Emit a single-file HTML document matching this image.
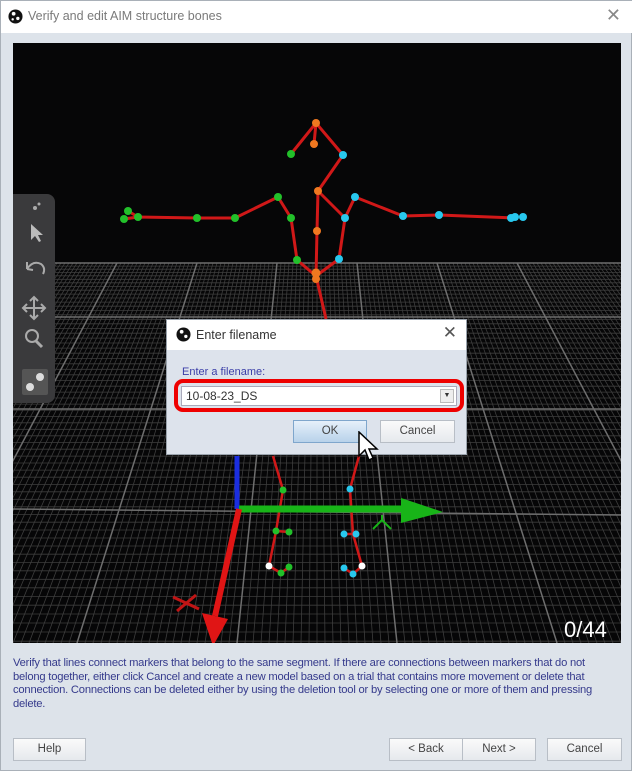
<!DOCTYPE html>
<html><head><meta charset="utf-8"><style>
*{margin:0;padding:0;box-sizing:border-box}
body{width:632px;height:771px;background:#dde3ea;font-family:"Liberation Sans",sans-serif;position:relative;overflow:hidden;border:1px solid #a9b0b8}
.title{position:absolute;left:0;top:0;width:632px;height:32px;background:#fff;font-size:12.5px;color:#7a7a7a}
.title span{position:absolute;left:27px;top:8px}
.x{position:absolute;right:12px;top:4px;font-size:18px;color:#888;font-weight:300}
.vp{position:absolute;left:12px;top:42px;width:608px;height:600px;background:#060607;overflow:hidden}
.btn{position:absolute;height:23px;border:1px solid #b8bec6;background:linear-gradient(#fafafa,#e6e9ed);font-size:11.5px;color:#444;text-align:center;line-height:21px}
.desc{position:absolute;left:12px;top:656px;width:592px;font-size:11.2px;line-height:13.5px;color:#353a8c;letter-spacing:-0.2px}
</style></head><body>
<div class="title">
<svg style="position:absolute;left:7px;top:8px" width="15" height="15" viewBox="0 0 16 16"><circle cx="8" cy="8" r="7.5" fill="#111"/><circle cx="6" cy="5" r="2" fill="#fff"/><circle cx="10.5" cy="10" r="1.8" fill="#fff"/><circle cx="5" cy="11" r="1.3" fill="#fff"/></svg>
<span>Verify and edit AIM structure bones</span><div class="x">✕</div></div>

<div class="vp">
<svg width="608" height="600" viewBox="12 42 608 600" style="position:absolute;left:0;top:0">
<g id="grid">
<g id="fallback" stroke="#3a3a3a" stroke-width="1" fill="none">
<path d="M12 262H620M12 268H620M12 275H620M12 282H620M12 290H620M12 298H620M12 307H620M12 316H620M12 326H620M12 336H620M12 347H620M12 358H620M12 370H620M12 382H620M12 395H620M12 408H620M12 422H620M12 436H620M12 451H620M12 466H620M12 482H620M12 498H620M12 515H620M12 532H620M12 550H620M12 568H620M12 587H620M12 606H620M12 626H620"/>
<path d="M16 262L-284 642M36 262L-244 642M56 262L-204 642M76 262L-164 642M96 262L-124 642M116 262L-84 642M136 262L-44 642M156 262L-4 642M176 262L36 642M196 262L76 642M216 262L116 642M236 262L156 642M256 262L196 642M276 262L236 642M296 262L276 642M316 262L316 642M336 262L356 642M356 262L396 642M376 262L436 642M396 262L476 642M416 262L516 642M436 262L556 642M456 262L596 642M476 262L636 642M496 262L676 642M516 262L716 642M536 262L756 642M556 262L796 642M576 262L836 642M596 262L876 642M616 262L916 642"/>
</g>
</g>
<g stroke="#6e6e6e" stroke-width="1.5" fill="none">
<path d="M12 262H620M12 316H620M12 508L620 514M12 408H620M276 262L236 642M356 262L396 642M196 262L76 642M436 262L556 642M516 262L716 642M116 262L-84 642"/>
</g>
<g stroke="#d01818" stroke-width="3" fill="none" stroke-linejoin="round">
<path d="M290 153L315 122L313 143M315 122L342 154L317 190L316 230L315 275L325 318M317 190L344 217M277 196L290 217L296 259L315 275L338 258L344 217L354 196L402 215L438 214L515 217M277 196L234 217L196 217L137 216L123 218M137 216L127 210"/>
<path d="M272 455L282 489L275 530L268 565L280 572L288 566M358 455L349 488L352 533L361 565L352 573L343 567M275 530L288 531M343 533L355 533" stroke-width="2.5"/>
</g>
<path d="M236 455V508" stroke="#1b2ee0" stroke-width="5"/>
<path d="M238 508H405" stroke="#18b418" stroke-width="7"/>
<path d="M400 497L442 511L400 522Z" fill="#18b418"/>
<path d="M372 528L381 519L390 528M381 519V514" stroke="#18b418" stroke-width="2" fill="none"/>
<path d="M238 508L214 615" stroke="#e01515" stroke-width="6"/>
<path d="M201 612L227 618L212 645Z" fill="#e01515"/>
<path d="M172 596L198 608M176 610L195 594" stroke="#c01515" stroke-width="3"/>
<g fill="#22c02a"><circle cx="290" cy="153" r="4"/><circle cx="277" cy="196" r="4"/><circle cx="290" cy="217" r="4"/><circle cx="296" cy="259" r="4"/><circle cx="234" cy="217" r="4"/><circle cx="196" cy="217" r="4"/><circle cx="137" cy="216" r="4"/><circle cx="123" cy="218" r="4"/><circle cx="127" cy="210" r="4"/><circle cx="282" cy="489" r="3.5"/><circle cx="275" cy="530" r="3.5"/><circle cx="288" cy="531" r="3.5"/><circle cx="280" cy="572" r="3.5"/><circle cx="288" cy="566" r="3.5"/></g>
<g fill="#28c8ee"><circle cx="342" cy="154" r="4"/><circle cx="354" cy="196" r="4"/><circle cx="344" cy="217" r="4"/><circle cx="338" cy="258" r="4"/><circle cx="402" cy="215" r="4"/><circle cx="438" cy="214" r="4"/><circle cx="510" cy="217" r="4"/><circle cx="514" cy="216" r="4"/><circle cx="522" cy="216" r="4"/><circle cx="349" cy="488" r="3.5"/><circle cx="343" cy="533" r="3.5"/><circle cx="355" cy="533" r="3.5"/><circle cx="352" cy="573" r="3.5"/><circle cx="343" cy="567" r="3.5"/></g>
<g fill="#f07820"><circle cx="315" cy="122" r="4"/><circle cx="313" cy="143" r="4"/><circle cx="317" cy="190" r="4"/><circle cx="316" cy="230" r="4"/><circle cx="315" cy="272" r="4.5"/><circle cx="315" cy="278" r="4"/></g>
<g fill="#fff"><circle cx="268" cy="565" r="3.5"/><circle cx="361" cy="565" r="3.5"/></g>
<text x="563" y="636" fill="#fff" font-size="22" font-family="Liberation Sans">0/44</text>
</svg>
<div style="position:absolute;left:0;top:151px;width:42px;height:209px;background:#3a3a3c;border-radius:0 8px 8px 0"></div>
<svg style="position:absolute;left:0;top:151px" width="42" height="209" viewBox="0 0 42 209" fill="none" stroke="#aaa" stroke-width="2">
<circle cx="22" cy="14" r="2" fill="#aaa" stroke="none"/><circle cx="26" cy="10" r="1.5" fill="#aaa" stroke="none"/>
<path d="M18 30L18 46L22 42L26 48L28 47L25 41L30 41Z" fill="#bbb" stroke="none"/>
<path d="M14 75Q20 66 28 70Q33 74 30 80M14 75L14 68M14 75L20 76"/>
<path d="M21 103V125M10 114H32M17 107L21 103L25 107M17 121L21 125L25 121M14 110L10 114L14 118M28 110L32 114L28 118"/>
<circle cx="19" cy="142" r="6"/><path d="M23 147L29 153" stroke-width="3"/>
<rect x="9" y="175" width="26" height="26" rx="2" fill="#555" stroke="none"/>
<circle cx="27" cy="183" r="4" fill="#ddd" stroke="none"/><circle cx="17" cy="193" r="4" fill="#ddd" stroke="none"/>
</svg>
</div>
<script>
(function(){
var g=document.getElementById('grid'),fb=document.getElementById('fallback');
var d='';
for(var k=0;k<80;k++){var y=262+3*k+0.05*k*k;if(y>645)break;d+='M12 '+y.toFixed(1)+'H620';}
for(var i=-80;i<=80;i++){d+='M'+(316+4*i)+' 262L'+(316+8*i)+' 642';}
var p=document.createElementNS('http://www.w3.org/2000/svg','path');
p.setAttribute('d',d);p.setAttribute('stroke','#3d3d3d');p.setAttribute('stroke-width','0.8');p.setAttribute('fill','none');
g.removeChild(fb);g.appendChild(p);
})();
</script>

<div style="position:absolute;left:165px;top:318px;width:301px;height:136px;background:#dde3ec;border:1px solid #9aa3ad">
<div style="height:30px;background:#fff;position:relative;font-size:12.5px;color:#333">
<svg style="position:absolute;left:9px;top:7px" width="15" height="15" viewBox="0 0 16 16"><circle cx="8" cy="8" r="7.5" fill="#111"/><circle cx="6" cy="5" r="2" fill="#fff"/><circle cx="10.5" cy="10" r="1.8" fill="#fff"/></svg>
<span style="position:absolute;left:29px;top:8px">Enter filename</span>
<span style="position:absolute;right:9px;top:3px;font-size:17px;color:#555">✕</span></div>
<div style="position:absolute;left:15px;top:46px;font-size:11px;color:#3a3ea8">Enter a filename:</div>
<div style="position:absolute;left:7px;top:59px;width:290px;height:33px;border:4px solid #e00;border-radius:9px"></div>
<div style="position:absolute;left:14px;top:66px;width:276px;height:20px;background:#fff;border:1px solid #aab;font-size:12px;color:#333;padding:2px 4px">10-08-23_DS
<div style="position:absolute;right:2px;top:2px;width:14px;height:14px;border:1px solid #bbb;background:#eee;font-size:7px;text-align:center;line-height:12px">▼</div></div>
<div class="btn" style="left:126px;top:100px;width:74px;background:linear-gradient(#e6f0fa,#b8d2ea);border-color:#7fa6cc">OK</div>
<div class="btn" style="left:213px;top:100px;width:75px">Cancel</div>
</div>
<svg style="position:absolute;left:357px;top:430px" width="22" height="32" viewBox="0 0 22 32"><path d="M1 1V25L7 19L11 29L15 27L11 18H19Z" fill="#fff" stroke="#000" stroke-width="1.5"/></svg>

<div class="desc">Verify that lines connect markers that belong to the same segment. If there are connections between markers that do not<br>belong together, either click Cancel and create a new model based on a trial that contains more movement or delete that<br>connection. Connections can be deleted either by using the deletion tool or by selecting one or more of them and pressing<br>delete.</div>
<div class="btn" style="left:12px;top:737px;width:73px">Help</div>
<div class="btn" style="left:388px;top:737px;width:74px">&lt; Back</div>
<div class="btn" style="left:461px;top:737px;width:74px">Next &gt;</div>
<div class="btn" style="left:546px;top:737px;width:75px">Cancel</div>
</body></html>
